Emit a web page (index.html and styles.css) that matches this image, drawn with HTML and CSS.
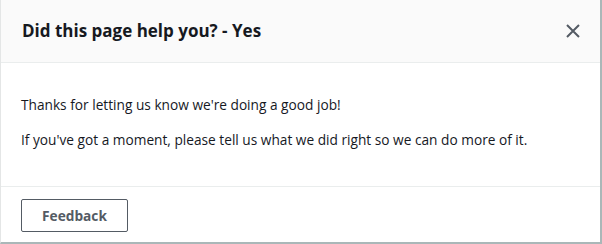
FILE: index.html
```html
<!DOCTYPE html>
<html>
<head>
<meta charset="utf-8">
<link rel="stylesheet" href="styles.css">
</head>
<body>
<div class="modal">
  <div class="header">
    <h2 class="title">Did this page help you? - Yes</h2>
    <button class="close" aria-label="Close">
      <svg width="16" height="16" viewBox="0 0 16 16"><path d="M2 2 L14 14 M14 2 L2 14" stroke="#545b64" stroke-width="2" fill="none"/></svg>
    </button>
  </div>
  <div class="content">
    <p>Thanks for letting us know we're doing a good job!</p>
    <p>If you've got a moment, please tell us what we did right so we can do more of it.</p>
  </div>
  <div class="footer">
    <button class="btn">Feedback</button>
  </div>
</div>
</body>
</html>
```
FILE: styles.css
```css
html, body { margin: 0; padding: 0; background: #ffffff; }
body { font-family: "Open Sans", "Noto Sans", sans-serif; color: #16191f; }
.modal {
  border-left: 1px solid #e4e6e6;
  border-right: 2px solid #aab7b8;
  border-bottom: 2px solid #aab7b8;
  box-sizing: border-box;
  width: 602px;
  height: 244px;
  display: flex;
  flex-direction: column;
}
.header {
  height: 63px;
  background: #fafafa;
  border-bottom: 1px solid #eaeded;
  display: flex;
  align-items: center;
  justify-content: space-between;
  padding: 0 19px 0 21px;
  box-sizing: border-box;
  flex: none;
}
.title { margin: 0; font-size: 17px; font-weight: 700; line-height: 22px; }
.close { background: none; border: 0; padding: 0; width: 16px; height: 16px; display: flex; cursor: pointer; }
.content { padding: 32px 20px 0 20px; font-size: 13.7px; line-height: 20px; flex: 1; }
.content p { margin: 0 0 15px; }
.footer { border-top: 1px solid #eaeded; padding: 12px 20px 0; flex: none; height: 56px; box-sizing: border-box; }
.btn {
  font-family: inherit;
  font-size: 13.7px;
  font-weight: 700;
  color: #545b64;
  background: #fff;
  border: 1px solid #545b64;
  border-radius: 2px;
  width: 107px;
  height: 33px;
  padding: 0;
  display: block;
}
```
